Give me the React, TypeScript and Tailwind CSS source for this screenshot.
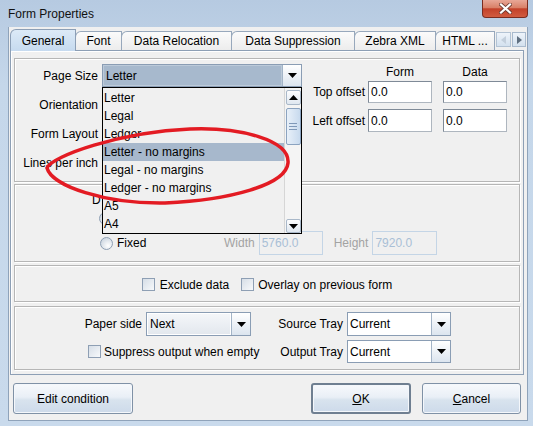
import React from "react";

function DownTri({ color = "#000" }: { color?: string }) {
  return (
    <svg width="9" height="5" viewBox="0 0 9 5">
      <path d="M0 0H9L4.5 5Z" fill={color} />
    </svg>
  );
}

function UpTri({ color = "#000" }: { color?: string }) {
  return (
    <svg width="9" height="5" viewBox="0 0 9 5">
      <path d="M0 5H9L4.5 0Z" fill={color} />
    </svg>
  );
}

function Combo({
  value,
  w,
  h,
  kind,
}: {
  value: string;
  w: string;
  h: string;
  kind: "sel" | "plain" | "white";
}) {
  const field =
    kind === "sel"
      ? "bg-[#a7b9cd] border border-[#bccad9]"
      : kind === "plain"
      ? "bg-[linear-gradient(to_bottom,#f4f6f9,#e3e8ee)] border border-white"
      : "bg-white";
  return (
    <div className={`${w} ${h} flex border border-[#8a9db4] bg-white`}>
      <div className={`flex-1 flex items-center pl-[2px] ${field}`}>{value}</div>
      <div className="w-[19px] flex items-center justify-center border-l border-[#a3b4c7] bg-[linear-gradient(to_bottom,#ffffff,#dce5ef)]">
        <DownTri />
      </div>
    </div>
  );
}

function Field({
  value,
  w,
  h,
  disabled,
}: {
  value: string;
  w: string;
  h: string;
  disabled?: boolean;
}) {
  return (
    <div
      className={`${w} ${h} flex items-center pl-[2px] border ${
        disabled
          ? "border-[#c4d5e6] text-[#a9bfd6]"
          : "bg-white border-[#7f8a97] border-b-[#aeb6bf] border-r-[#aeb6bf]"
      }`}
    >
      {value}
    </div>
  );
}

function Check() {
  return (
    <div className="w-[13px] h-[13px] shrink-0 border border-[#8e9fb4] bg-[linear-gradient(135deg,#d6dee7,#f7f9fb)]" />
  );
}

function Radio() {
  return (
    <div className="w-[13px] h-[13px] shrink-0 rounded-full border border-[#8e9fb4] bg-[radial-gradient(circle_at_65%_70%,#ffffff,#d0d9e3_75%)]" />
  );
}

function Btn({
  children,
  w,
  def,
  cls,
}: {
  children: React.ReactNode;
  w: string;
  def?: boolean;
  cls?: string;
}) {
  return (
    <div
      className={`${w} ${cls ?? ""} h-[31px] flex items-center justify-center rounded-[3px] ${
        def ? "border-2 border-[#6f7f91]" : "border border-[#7f91a6]"
      } bg-[linear-gradient(to_bottom,#f7f9fc,#e9eff6_45%,#d8e3ee_55%,#cddaea)] shadow-[inset_0_0_0_1px_#f4f7fb]`}
    >
      {children}
    </div>
  );
}

const items = [
  "Letter",
  "Legal",
  "Ledger",
  "Letter - no margins",
  "Legal - no margins",
  "Ledger - no margins",
  "A5",
  "A4",
];

export default function App() {
  return (
    <div className="relative w-[533px] h-[426px] overflow-hidden bg-[linear-gradient(to_bottom,#b6cae1,#c5d7ea_20%,#c9daec)] font-['Liberation_Sans',Arial,sans-serif] text-[12px] text-black leading-none">
      {/* title bar */}
      <div className="h-[27px] flex">
        <div className="pl-[8px] self-center pt-[1px] text-[#111]">Form Properties</div>
        <div className="ml-auto mr-[5px] w-[46px] h-[18px] flex items-center justify-center rounded-b-[4px] border border-t-0 border-[#7a2c20] bg-[linear-gradient(to_bottom,#e8a797,#d98068_45%,#c3412a_52%,#d15c40)]">
          <svg width="13" height="11" viewBox="0 0 13 11">
            <path d="M2 1.5L11 9.5M11 1.5L2 9.5" stroke="#6b3a32" strokeWidth="3.8" strokeLinecap="square" />
            <path d="M2 1.5L11 9.5M11 1.5L2 9.5" stroke="#ffffff" strokeWidth="2.2" strokeLinecap="square" />
          </svg>
        </div>
      </div>

      {/* client area */}
      <div className="ml-[8px] w-[520px] h-[394px] bg-[#f0f0f0] border-x border-b border-[#8fa3ba] pt-[2px]">
        {/* tabs */}
        <div className="flex items-end h-[21px] pl-[1px]">
          <div className="relative z-10 w-[66px] h-[22px] -mb-px border border-b-0 border-[#8c9fb6] rounded-tl-[6px] bg-[linear-gradient(to_bottom,#dceaf7,#c6daef)] flex items-center justify-center">
            General
          </div>
          <div className="-ml-px w-[47px] h-[19px] border border-b-0 border-[#97a8bc] rounded-tl-[6px] bg-[linear-gradient(to_bottom,#fbfbfb,#ececec)] flex items-center justify-center">
            Font
          </div>
          <div className="-ml-px w-[111px] h-[19px] border border-b-0 border-[#97a8bc] rounded-tl-[6px] bg-[linear-gradient(to_bottom,#fbfbfb,#ececec)] flex items-center justify-center">
            Data Relocation
          </div>
          <div className="-ml-px w-[124px] h-[19px] border border-b-0 border-[#97a8bc] rounded-tl-[6px] bg-[linear-gradient(to_bottom,#fbfbfb,#ececec)] flex items-center justify-center">
            Data Suppression
          </div>
          <div className="-ml-px w-[82px] h-[19px] border border-b-0 border-[#97a8bc] rounded-tl-[6px] bg-[linear-gradient(to_bottom,#fbfbfb,#ececec)] flex items-center justify-center">
            Zebra XML
          </div>
          <div className="-ml-px w-[60px] h-[19px] border border-b-0 border-[#97a8bc] rounded-tl-[6px] bg-[linear-gradient(to_bottom,#fbfbfb,#ececec)] flex items-center justify-center">
            HTML ...
          </div>
          <div className="ml-[1px] mb-[3px] w-[15px] h-[15px] border border-[#b3c3d4] bg-[linear-gradient(to_bottom,#eef4fa,#d3e0ee)] flex items-center justify-center">
            <svg width="5" height="8" viewBox="0 0 5 8">
              <path d="M5 0V8L0 4Z" fill="#c3cfdc" />
            </svg>
          </div>
          <div className="ml-[1px] mb-[3px] w-[14px] h-[15px] border border-[#a9bacd] bg-[linear-gradient(to_bottom,#eef4fa,#d3e0ee)] flex items-center justify-center">
            <svg width="5" height="8" viewBox="0 0 5 8">
              <path d="M0 0V8L5 4Z" fill="#5f6f80" />
            </svg>
          </div>
        </div>

        {/* tab panel */}
        <div className="ml-[1px] w-[514px] h-[325px] border border-[#8d9fb5] shadow-[inset_1px_1px_0_#ffffff] px-[3px] pt-[7px] flex flex-col">
          {/* panel 1 */}
          <div className="relative h-[124px] border border-[#b6b6b6] shadow-[inset_1px_1px_0_#fff,1px_1px_0_#fff] flex">
            <div className="flex flex-col pt-[5px] gap-[6px]">
              <div className="flex items-center h-[23px]">
                <div className="w-[83px] text-right">Page Size</div>
                <div className="relative ml-[4px]">
                  <Combo value="Letter" w="w-[200px]" h="h-[23px]" kind="sel" />
                  <div className="absolute left-0 top-[23px] z-20 w-[200px] h-[147px] border border-black bg-[#f0f0f0] flex">
                    <div className="flex-1 flex flex-col pt-[1px] overflow-hidden">
                      {items.map((it, i) => (
                        <div
                          key={it}
                          className={`h-[18px] shrink-0 flex items-center pl-[1px] ${
                            i === 3 ? "bg-[#a7b8cc]" : ""
                          }`}
                        >
                          {it}
                        </div>
                      ))}
                    </div>
                    <div className="w-[17px] border-l border-[#d6d6d6] bg-[#f4f4f4] flex flex-col items-center pt-[2px]">
                      <div className="w-[15px] h-[15px] rounded-[2px] border border-[#a9b8c9] bg-[linear-gradient(to_bottom,#fdfdfe,#dfe7f0)] flex items-center justify-center">
                        <UpTri />
                      </div>
                      <div className="mt-[3px] w-[15px] h-[37px] rounded-[2px] border border-[#8ba3c0] bg-[linear-gradient(to_right,#e8f0f9,#c8daee)] flex flex-col items-center justify-center gap-[2px]">
                        <div className="w-[8px] h-px bg-[#7f98b8]" />
                        <div className="w-[8px] h-px bg-[#7f98b8]" />
                        <div className="w-[8px] h-px bg-[#7f98b8]" />
                      </div>
                      <div className="mt-auto w-[15px] h-[14px] rounded-[2px] border border-[#a9b8c9] bg-[linear-gradient(to_bottom,#fdfdfe,#dfe7f0)] flex items-center justify-center">
                        <DownTri />
                      </div>
                    </div>
                  </div>
                </div>
              </div>
              <div className="flex items-center h-[23px]">
                <div className="w-[83px] text-right">Orientation</div>
                <div className="ml-[4px]">
                  <Combo value="" w="w-[200px]" h="h-[23px]" kind="plain" />
                </div>
              </div>
              <div className="flex items-center h-[23px]">
                <div className="w-[83px] text-right">Form Layout</div>
                <div className="ml-[4px]">
                  <Combo value="" w="w-[200px]" h="h-[23px]" kind="plain" />
                </div>
              </div>
              <div className="flex items-center h-[23px]">
                <div className="w-[83px] text-right">Lines per inch</div>
                <div className="ml-[4px]">
                  <Combo value="" w="w-[200px]" h="h-[23px]" kind="plain" />
                </div>
              </div>
            </div>

            <div className="ml-[7px] pt-[6px] flex flex-col">
              <div className="flex h-[14px] items-center">
                <div className="w-[59px]" />
                <div className="w-[64px] text-center">Form</div>
                <div className="ml-[11px] w-[64px] text-center">Data</div>
              </div>
              <div className="mt-[2px] flex items-center h-[22px]">
                <div className="w-[56px] text-right">Top offset</div>
                <div className="ml-[3px]">
                  <Field value="0.0" w="w-[64px]" h="h-[22px]" />
                </div>
                <div className="ml-[11px]">
                  <Field value="0.0" w="w-[64px]" h="h-[22px]" />
                </div>
              </div>
              <div className="mt-[6px] flex items-center h-[23px]">
                <div className="w-[56px] text-right">Left offset</div>
                <div className="ml-[3px]">
                  <Field value="0.0" w="w-[64px]" h="h-[23px]" />
                </div>
                <div className="ml-[11px]">
                  <Field value="0.0" w="w-[64px]" h="h-[23px]" />
                </div>
              </div>
            </div>
          </div>

          {/* panel 2 */}
          <div className="mt-[2px] h-[78px] border border-[#b6b6b6] shadow-[inset_1px_1px_0_#fff,1px_1px_0_#fff] flex flex-col">
            <div className="mt-[8px] h-[14px] pl-[77px] flex items-center">
              <div className="w-[10px] overflow-hidden whitespace-nowrap">D</div>
            </div>
            <div className="mt-[5px] h-[13px] pl-[84px] flex items-center">
              <Radio />
            </div>
            <div className="mt-[6px] h-[24px] pl-[85px] flex items-center">
              <div className="w-[124px] flex items-center">
                <Radio />
                <span className="ml-[4px]">Fixed</span>
              </div>
              <span className="text-[#a3a3a3]">Width</span>
              <div className="ml-[4px]">
                <Field value="5760.0" w="w-[64px]" h="h-[24px]" disabled />
              </div>
              <span className="ml-[11px] text-[#a3a3a3]">Height</span>
              <div className="ml-[4px]">
                <Field value="7920.0" w="w-[65px]" h="h-[24px]" disabled />
              </div>
            </div>
          </div>

          {/* panel 3 */}
          <div className="mt-[3px] h-[37px] border border-[#b6b6b6] shadow-[inset_1px_1px_0_#fff,1px_1px_0_#fff] flex items-center justify-center pt-[2px]">
            <Check />
            <span className="ml-[5px]">Exclude data</span>
            <div className="ml-[12px]">
              <Check />
            </div>
            <span className="ml-[4px]">Overlay on previous form</span>
          </div>

          {/* panel 4 */}
          <div className="mt-[4px] h-[64px] border border-[#b6b6b6] shadow-[inset_1px_1px_0_#fff,1px_1px_0_#fff] flex flex-col">
            <div className="mt-[5px] h-[24px] flex items-center">
              <div className="w-[255px] flex items-center justify-end pr-[19px]">
                <span>Paper side</span>
                <div className="ml-[4px]">
                  <Combo value="Next" w="w-[105px]" h="h-[24px]" kind="plain" />
                </div>
              </div>
              <div className="w-[73px] text-right">Source Tray</div>
              <div className="ml-[4px]">
                <Combo value="Current" w="w-[104px]" h="h-[24px]" kind="white" />
              </div>
            </div>
            <div className="mt-[4px] h-[23px] flex items-center">
              <div className="w-[255px] flex items-center pl-[73px]">
                <Check />
                <span className="ml-[3px]">Suppress output when empty</span>
              </div>
              <div className="w-[73px] text-right">Output Tray</div>
              <div className="ml-[4px]">
                <Combo value="Current" w="w-[104px]" h="h-[23px]" kind="white" />
              </div>
            </div>
          </div>
        </div>

        {/* buttons */}
        <div className="mt-[8px] flex">
          <Btn w="w-[120px]" cls="ml-[4px]">Edit condition</Btn>
          <Btn w="w-[100px]" cls="ml-[178px]" def>
            <span>
              <u>O</u>K
            </span>
          </Btn>
          <Btn w="w-[99px]" cls="ml-[11px]">
            <span>
              <u>C</u>ancel
            </span>
          </Btn>
        </div>
      </div>

      {/* red hand-drawn ellipse annotation */}
      <svg
        className="absolute left-0 top-0 z-30 pointer-events-none"
        width="533"
        height="426"
        viewBox="0 0 533 426"
      >
        <path
          d="M47 168 C52 156 120 132 190 129 C240 127 290 140 288 163 C286 185 230 200 165 203 C105 204 52 186 47 168 Z"
          fill="none"
          stroke="#e31b23"
          strokeWidth="3.5"
        />
      </svg>
    </div>
  );
}
